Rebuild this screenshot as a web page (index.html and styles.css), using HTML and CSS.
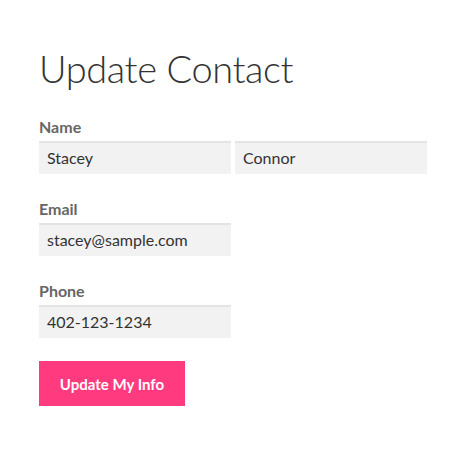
FILE: index.html
```html
<!DOCTYPE html>
<html>
<head>
<meta charset="utf-8">
<link rel="stylesheet" href="styles.css">
</head>
<body>
<div class="page">
  <h1 class="title">Update Contact</h1>
  <form class="form">
    <div class="field">
      <label class="label">Name</label>
      <div class="row">
        <div class="input">Stacey</div>
        <div class="input">Connor</div>
      </div>
    </div>
    <div class="field">
      <label class="label">Email</label>
      <div class="row">
        <div class="input">stacey@sample.com</div>
      </div>
    </div>
    <div class="field">
      <label class="label">Phone</label>
      <div class="row">
        <div class="input">402-123-1234</div>
      </div>
    </div>
    <div class="button">Update My Info</div>
  </form>
</div>
</body>
</html>
```
FILE: styles.css
```css
html, body { margin: 0; padding: 0; background: #fff; }
body { font-family: "Lato", "Open Sans", sans-serif; color: #333; }
.page { padding: 43px 0 0 39px; width: 388px; }
.title {
  margin: 0;
  font-weight: 300;
  font-size: 38px;
  line-height: 50px;
  color: #333;
  letter-spacing: -0.4px;
}
.form { margin-top: 25px; display: flex; flex-direction: column; }
.field { display: flex; flex-direction: column; margin-bottom: 26px; }
.label {
  font-weight: 700;
  font-size: 16px;
  color: #666;
  line-height: 18px;
  margin-bottom: 5px;
}
.row { display: flex; gap: 4px; }
.input {
  width: 192px;
  box-sizing: border-box;
  height: 33px;
  background: #f2f2f2;
  border-top: 2px solid #e4e4e4;
  padding: 0 8px;
  font-size: 16px;
  line-height: 30px;
  color: #333;
}
.button {
  margin-top: -3px;
  width: 146px;
  height: 45px;
  background: #ff3a7e;
  color: #fff;
  font-weight: 700;
  font-size: 15px;
  display: flex;
  align-items: center;
  justify-content: center;
}
```
